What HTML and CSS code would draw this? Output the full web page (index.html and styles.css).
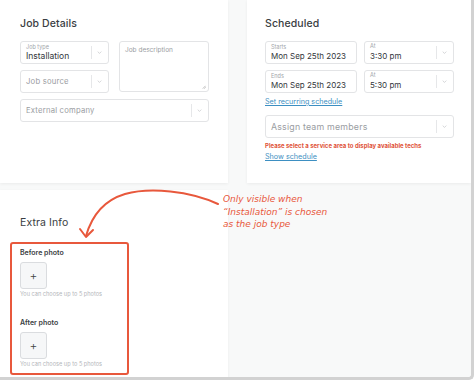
FILE: index.html
```html
<!DOCTYPE html>
<html lang="en">
<head>
    <meta charset="UTF-8">
    <meta name="viewport" content="width=device-width, initial-scale=1.0">
    <title>Job Form</title>
    <link rel="stylesheet" href="styles.css">
</head>
<body>
<div class="page">

    <!-- Job details -->
    <div class="card">
        <h2>Job Details</h2>
        <div class="details-grid">
            <div class="left-col">
                <div class="field select">
                    <div class="field-body">
                        <span class="label">Job type</span>
                        <span class="value">Installation</span>
                    </div>
                    <div class="chev"><svg viewBox="0 0 8 5"><path d="M1 1l3 3 3-3"/></svg></div>
                </div>
                <div class="field select">
                    <div class="field-body">
                        <span class="placeholder">Job source</span>
                    </div>
                    <div class="chev"><svg viewBox="0 0 8 5"><path d="M1 1l3 3 3-3"/></svg></div>
                </div>
            </div>
            <div class="field textarea">
                <span class="ta-placeholder">Job description</span>
                <svg class="grip" viewBox="0 0 5 5"><path d="M4.5 1L1 4.5M4.5 3L3 4.5"/></svg>
            </div>
        </div>
        <div class="field select wide">
            <div class="field-body">
                <span class="placeholder">External company</span>
            </div>
            <div class="chev"><svg viewBox="0 0 8 5"><path d="M1 1l3 3 3-3"/></svg></div>
        </div>
    </div>

    <!-- Schedule -->
    <div class="card">
        <h2>Scheduled</h2>
        <div class="sched-grid">
            <div class="field">
                <div class="field-body">
                    <span class="label">Starts</span>
                    <span class="value date">Mon Sep 25th 2023</span>
                </div>
            </div>
            <div class="field select">
                <div class="field-body">
                    <span class="label">At</span>
                    <span class="value low">3:30 pm</span>
                </div>
                <div class="chev"><svg viewBox="0 0 8 5"><path d="M1 1l3 3 3-3"/></svg></div>
            </div>
            <div class="field">
                <div class="field-body">
                    <span class="label">Ends</span>
                    <span class="value date">Mon Sep 25th 2023</span>
                </div>
            </div>
            <div class="field select">
                <div class="field-body">
                    <span class="label">At</span>
                    <span class="value low">5:30 pm</span>
                </div>
                <div class="chev"><svg viewBox="0 0 8 5"><path d="M1 1l3 3 3-3"/></svg></div>
            </div>
        </div>
        <a class="link" href="#">Set recurring schedule</a>
        <div class="field select team">
            <div class="field-body">
                <span class="placeholder">Assign team members</span>
            </div>
            <div class="chev"><svg viewBox="0 0 8 5"><path d="M1 1l3 3 3-3"/></svg></div>
        </div>
        <p class="error">Please select a service area to display available techs</p>
        <a class="link show" href="#">Show schedule</a>
    </div>

    <!-- Extra info -->
    <div class="card extra">
        <h2>Extra Info</h2>
        <div class="highlight">
            <div class="photo-group">
                <h4>Before photo</h4>
                <div class="add-photo">+</div>
                <p class="hint">You can choose up to 5 photos</p>
            </div>
            <div class="photo-group">
                <h4>After photo</h4>
                <div class="add-photo">+</div>
                <p class="hint">You can choose up to 5 photos</p>
            </div>
        </div>
    </div>

    <!-- Annotation -->
    <div class="note">Only visible when<br>&ldquo;Installation&rdquo; is chosen<br>as the job type</div>
    <svg class="arrow" viewBox="0 0 474 380">
        <path d="M218 204 C 190 191, 150 187, 125 194 C 105 200, 92 215, 86 236"/>
        <path d="M80 229 L86 237 L93 230"/>
    </svg>

</div>
</body>
</html>
```

FILE: styles.css
```css
* {
    margin: 0;
    padding: 0;
    box-sizing: border-box;
}
body {
    font-family: 'Inter', 'Noto Sans', sans-serif;
    background-color: #ffffff;
    color: #333;
}
.page {
    position: relative;
    width: 474px;
    height: 380px;
    display: grid;
    grid-template-columns: 228px 224px;
    grid-template-rows: 183px 190px;
    column-gap: 19px;
    row-gap: 7px;
    background-color: #f8f9f9;
    border-right: 3px solid #d2d2d2;
    border-bottom: 3px solid #d2d2d2;
    border-bottom-right-radius: 5px;
    overflow: hidden;
}
.card {
    background-color: #fff;
    padding: 17px 20px 0 20px;
    box-shadow: 0 1px 3px rgba(0, 0, 0, 0.06);
}
.card:nth-child(2) {
    padding-left: 18px;
}
.card h2 {
    font-size: 10.5px;
    font-weight: 500;
    color: #3a3d42;
    letter-spacing: 0.1px;
    margin-bottom: 11px;
}
.details-grid {
    display: grid;
    grid-template-columns: 89px 90px;
    column-gap: 10px;
    margin-bottom: 6px;
}
.left-col {
    display: flex;
    flex-direction: column;
    gap: 6px;
}
.field {
    height: 23px;
    border: 1px solid #e3e4e6;
    border-radius: 3px;
    background: #fff;
    display: flex;
    align-items: stretch;
}
.field-body {
    flex: 1;
    display: flex;
    flex-direction: column;
    justify-content: center;
    padding-left: 5px;
    overflow: hidden;
    white-space: nowrap;
}
.label {
    font-size: 5.5px;
    color: #a2a5aa;
    line-height: 7px;
}
.value {
    font-size: 8.5px;
    color: #33363b;
    line-height: 11px;
}
.value.date {
    font-size: 8px;
}
.value.low {
    margin-top: 1px;
    font-size: 8px;
}
.placeholder {
    font-size: 7.7px;
    color: #9a9da2;
    letter-spacing: 0.2px;
}
.chev {
    width: 17px;
    display: flex;
    align-items: center;
    justify-content: center;
    position: relative;
}
.chev::before {
    content: "";
    position: absolute;
    left: 0;
    top: 4px;
    bottom: 4px;
    border-left: 1px solid #e6e7e9;
}
.chev svg {
    width: 5px;
    height: 3px;
    fill: none;
    stroke: #b8bbbf;
    stroke-width: 1;
}
.textarea {
    height: 51px;
    padding: 4px 5px;
    position: relative;
}
.ta-placeholder {
    font-size: 6.5px;
    color: #9a9da2;
}
.grip {
    position: absolute;
    right: 2px;
    bottom: 2px;
    width: 4px;
    height: 4px;
    fill: none;
    stroke: #999;
    stroke-width: 0.8;
}
.wide {
    width: 189px;
}
.sched-grid {
    display: grid;
    grid-template-columns: 92px 90px;
    column-gap: 7px;
    row-gap: 6px;
    margin-bottom: 4px;
}
.link {
    display: block;
    font-size: 7.2px;
    color: #3d8fc2;
    text-decoration: underline;
    line-height: 10px;
}
.link.show {
    margin-top: 2px;
}
.team {
    width: 189px;
    margin-top: 8px;
}
.team .placeholder {
    font-size: 8.8px;
}
.error {
    font-size: 6px;
    font-weight: 700;
    color: #e0533a;
    margin-top: 4px;
    line-height: 8px;
}
.extra {
    padding: 26px 10px 0 10px;
}
.extra h2 {
    font-weight: 400;
    padding-left: 10px;
    margin-bottom: 13px;
}
.highlight {
    width: 119px;
    height: 133px;
    border: 2px solid #e8583c;
    border-radius: 3px;
    padding: 4px 8px 0 8px;
    display: flex;
    flex-direction: column;
    gap: 21px;
}
.photo-group h4 {
    font-size: 7px;
    font-weight: 600;
    color: #3a3d42;
    margin-bottom: 5px;
}
.add-photo {
    width: 27px;
    height: 27px;
    border: 1px solid #dadcdf;
    border-radius: 3px;
    background: #f6f7f8;
    display: flex;
    align-items: center;
    justify-content: center;
    font-size: 12px;
    color: #444;
    font-weight: 300;
}
.hint {
    font-size: 5.6px;
    color: #b3b6ba;
    margin-top: 2px;
}
.note {
    position: absolute;
    left: 223px;
    top: 193px;
    font-family: 'DejaVu Sans', sans-serif;
    font-style: italic;
    font-size: 9px;
    line-height: 12.5px;
    color: #e8583c;
}
.arrow {
    position: absolute;
    left: 0;
    top: 0;
    width: 474px;
    height: 380px;
    fill: none;
    stroke: #e8583c;
    stroke-width: 2;
    stroke-linecap: round;
    stroke-linejoin: round;
    pointer-events: none;
}
```
